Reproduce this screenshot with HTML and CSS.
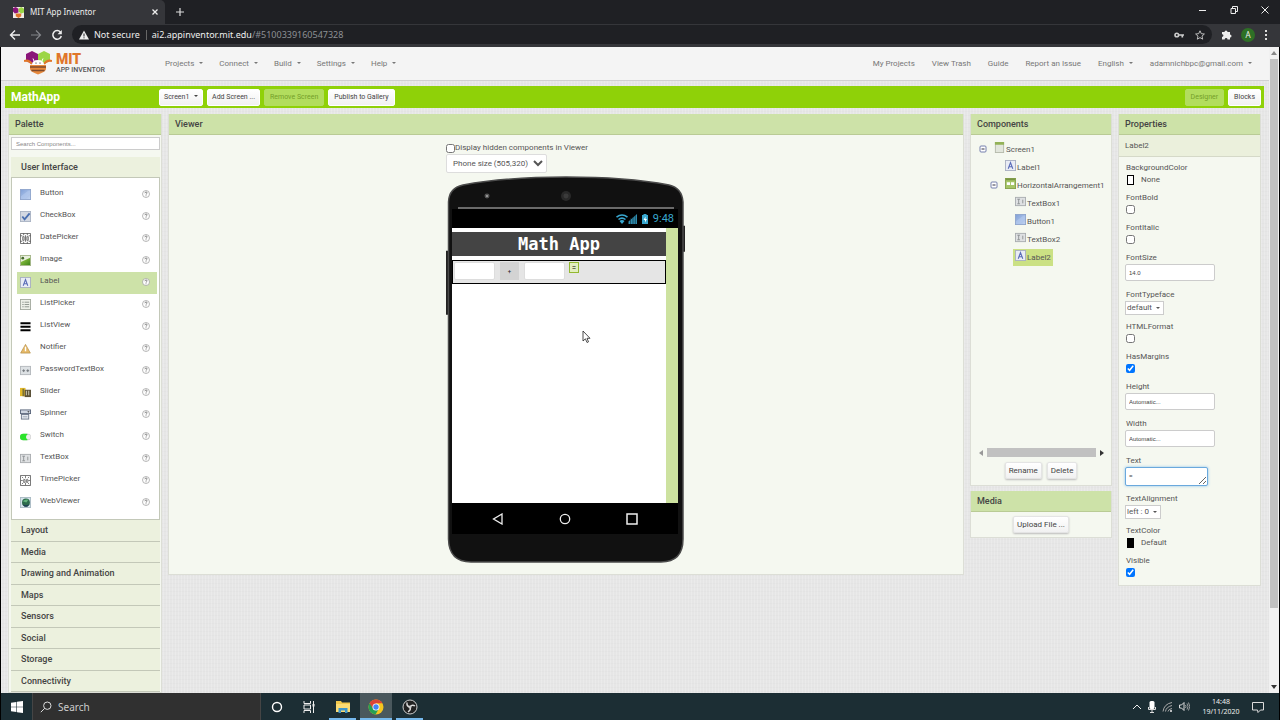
FILE: index.html
```
<!DOCTYPE html>
<html lang="en">
<head>
  <meta charset="utf-8">
  <title>MIT App Inventor</title>
  <link rel="stylesheet" href="styles.css">
</head>
<body>

<svg class="defs" width="0" height="0">
  <defs>
    <linearGradient id="blue" x1="0" y1="0" x2="1" y2="1"><stop offset="0" stop-color="#7f9fd6"/><stop offset="1" stop-color="#c3d5f2"/></linearGradient>
    <linearGradient id="green" x1="0" y1="0" x2="1" y2="1"><stop offset="0" stop-color="#9fce4a"/><stop offset="1" stop-color="#3d8417"/></linearGradient>
    <symbol id="i-button" viewBox="0 0 12 12"><rect x=".5" y=".5" width="11" height="11" fill="url(#blue)" stroke="#8fa5cc"/><path d="M1 8L9 2h2v3L5 11H1z" fill="#b4c9ee" opacity=".6"/></symbol>
    <symbol id="i-checkbox" viewBox="0 0 12 12"><rect x=".5" y=".5" width="11" height="11" fill="#d3d8e2" stroke="#aab3c4"/><path d="M2.500 6l2.500 3 5.500-6.500" fill="none" stroke="#4a6fb0" stroke-width="2"/></symbol>
    <symbol id="i-date" viewBox="0 0 12 12"><path d="M.5.5h11v11H.5zM.5 3h2M9.500 3h2M.5 9h2M9.500 9h2M4 .5v2M8 .5v2M4 9.500v2M8 9.500v2M6 2.500v7M3 4v4h1.500V4zM7.500 4v4H9V4z" fill="none" stroke="#444" stroke-width=".8"/></symbol>
    <symbol id="i-image" viewBox="0 0 12 12"><rect x=".5" y=".5" width="11" height="11" fill="#e8efdc" stroke="#a5b58a"/><path d="M1 7.500L11 3v8H1z" fill="url(#green)"/><circle cx="3" cy="3.500" r="1.500" fill="#446a2c"/></symbol>
    <symbol id="i-label" viewBox="0 0 12 12"><rect x=".5" y=".5" width="11" height="11" fill="#e9ecf5" stroke="#a9b0c2"/><path d="M3.500 9.500L6 2.800l2.500 6.700M4.300 7.300h3.400" fill="none" stroke="#5a6cb8" stroke-width="1.200"/></symbol>
    <symbol id="i-listpicker" viewBox="0 0 12 12"><rect x=".5" y=".5" width="11" height="11" fill="#edf0e8" stroke="#a3a9a0"/><path d="M2.500 3.500h1.500M5 3.500h5M2.500 6h1.500M5 6h5M2.500 8.500h1.500M5 8.500h5" stroke="#8a928a"/></symbol>
    <symbol id="i-listview" viewBox="0 0 12 12"><path d="M.5 2.500h11M.5 6.200h11M.5 10h11" stroke="#000" stroke-width="2.200"/></symbol>
    <symbol id="i-notifier" viewBox="0 0 12 12"><path d="M6 1.500L11.300 11H.7z" fill="#e6b968" stroke="#b8914a" stroke-width=".8"/><path d="M6 4v5" stroke="#fff" stroke-width="1.500"/></symbol>
    <symbol id="i-password" viewBox="0 0 12 12"><rect x=".5" y="1.500" width="11" height="9" fill="#dde1e4" stroke="#b3b8bc"/><path d="M2.500 6.200h3M4 4.700v3M7 6.200h3M8.500 4.700v3" stroke="#6e7478"/></symbol>
    <symbol id="i-slider" viewBox="0 0 12 12"><path d="M0 1h6v9H0z" fill="#e3b92a"/><path d="M5 3h7v8H5z" fill="#5b5138"/><path d="M3.500 2v8" stroke="#6f6a3c" stroke-width="1.500"/><path d="M7 4v5M9.500 4v5" stroke="#c0bfa8" stroke-width="1.200"/></symbol>
    <symbol id="i-spinner" viewBox="0 0 12 12"><rect x=".5" y="1" width="11" height="4" fill="#cfd6e2" stroke="#58647a"/><path d="M8 2.500l1.200 1.500 1.200-1.500z" fill="#333"/><rect x="1.500" y="6" width="8" height="5" fill="#e5e9ef" stroke="#6d778a"/><path d="M3 8.500h5" stroke="#9aa4b5"/></symbol>
    <symbol id="i-switch" viewBox="0 0 12 12"><rect x="0" y="3" width="12" height="7" rx="3.500" fill="#cfcfcf"/><path d="M3.500 3H8v7H3.500a3.500 3.500 0 010-7z" fill="#2be32b"/><circle cx="9" cy="6.500" r="2.500" fill="#eee"/></symbol>
    <symbol id="i-textbox" viewBox="0 0 12 12"><rect x=".5" y="1.500" width="11" height="9" fill="#dfe1e3" stroke="#a9adb0"/><path d="M2.500 3.500h3M2.500 8.500h3M4 3.500v5M8.500 4v4" stroke="#85898c" stroke-width=".9"/></symbol>
    <symbol id="i-time" viewBox="0 0 12 12"><path d="M.5.5h11v11H.5z" fill="none" stroke="#444" stroke-width=".8"/><path d="M6 1v2.500M6 8.500V11M1 6h2M9 6h2M2 2l1.500 1.500M10 2L8.500 3.500M2 10l1.500-1.500M10 10L8.500 8.500M4 5h1.500v3H4zM7 5h1.500v3H7z" fill="none" stroke="#555" stroke-width=".8"/></symbol>
    <symbol id="i-web" viewBox="0 0 12 12"><rect x=".5" y=".5" width="11" height="11" fill="#d5e3ea" stroke="#a9bac3"/><circle cx="6.500" cy="6" r="4.300" fill="#2c6b4c"/><path d="M3 4.500q3-2.500 6-1.500L7 6z" fill="#63b37c"/><path d="M2.500 7.500q4 3 8 0L8 10.500H5z" fill="#1d3c55"/></symbol>
    <symbol id="i-screen" viewBox="0 0 12 12"><rect x="1.500" y=".5" width="9" height="11" fill="#e2e6dc" stroke="#b5baac"/><path d="M1 0h10v3H1z" fill="#93b257"/></symbol>
    <symbol id="i-horiz" viewBox="0 0 12 12"><rect x=".5" y=".5" width="11" height="11" fill="#a5c566" stroke="#85a24b"/><path d="M1 .5h10v2H1z" fill="#789544"/><path d="M2 4.500h3.500v3H2zM6.500 4.500H10v3H6.500z" fill="#fff"/></symbol>
    <symbol id="i-help" viewBox="0 0 8 8"><circle cx="4" cy="4" r="3.500" fill="#fff" stroke="#999" stroke-width=".7"/><path d="M2.900 3.200q.1-1.200 1.200-1.200 1 0 1 .9 0 .6-.6.900-.5.3-.5.8M4 5.400v.8" fill="none" stroke="#666" stroke-width=".8"/></symbol>
    <symbol id="i-minus" viewBox="0 0 8 8"><rect x="1" y="1" width="6" height="6" rx="1" fill="#fff" stroke="#6673a5" stroke-width=".9"/><path d="M2.500 4h3" stroke="#334"/></symbol>
    <symbol id="i-logo" viewBox="0 0 28 24"><path d="M8 0l6 3v7l-6 3-6-3V3z" fill="#8a1579"/><path d="M20 0l6 3v7l-6 3-6-3V3z" fill="#9bd646"/><path d="M0 10q5-1.500 8 3M28 10q-5-1.500-8 3" fill="none" stroke="#e0762a" stroke-width="2"/><path d="M8 14q0-5 6-5t6 5z" fill="#fff"/><path d="M10 10l-1-2.500M18 10l1-2.500" stroke="#fff"/><circle cx="12" cy="12" r=".6"/><circle cx="16" cy="12" r=".6"/><path d="M6 14h16v4q0 2.500-8 5.500-8-3-8-5.500z" fill="#e88a3d"/><path d="M6 16h16M7.500 19.500h13" stroke="#7c4a2c" stroke-width="1.300"/></symbol>
  </defs>
</svg>

<div class="tabs">
  <div class="tab">
    <svg class="favicon" viewBox="0 0 12 12"><rect width="12" height="12" fill="#f3ece6"/><path d="M0 1l3-1 3 2v4L2 7 0 5z" fill="#8a1579"/><path d="M6 2l3-2 3 2v4L9 7 6 5z" fill="#9bd646"/><path d="M3 7h6v3l-3 2-3-2z" fill="#e0762a"/></svg>
    <span class="tab-title">MIT App Inventor</span>
    <button class="icon-btn" aria-label="Close tab"><svg width="8" height="8" viewBox="0 0 8 8"><path d="M1.500 1.500l5 5M6.500 1.500l-5 5" stroke="#eee" stroke-width="1.300"/></svg></button>
  </div>
  <button class="icon-btn new-tab" aria-label="New tab"><svg width="10" height="10" viewBox="0 0 10 10"><path d="M5 1v8M1 5h8" stroke="#ddd" stroke-width="1.200"/></svg></button>
  <div class="window-btns">
    <button class="icon-btn" aria-label="Minimize"><svg width="8" height="8" viewBox="0 0 8 8"><path d="M0 4.500h7" stroke="#eee"/></svg></button>
    <button class="icon-btn" aria-label="Restore"><svg width="8" height="8" viewBox="0 0 8 8"><path d="M1 2.500h4.500v5H1zM2.500 2.500v-2h5v5h-2" fill="none" stroke="#eee"/></svg></button>
    <button class="icon-btn" aria-label="Close"><svg width="8" height="8" viewBox="0 0 8 8"><path d="M.5.500l7 7M7.500.500l-7 7" stroke="#eee"/></svg></button>
  </div>
</div>

<div class="toolbar">
  <button class="icon-btn" aria-label="Back"><svg width="12" height="12" viewBox="0 0 12 12"><path d="M11 6H2M6 1.500L1.500 6 6 10.500" fill="none" stroke="#eee" stroke-width="1.400"/></svg></button>
  <button class="icon-btn" aria-label="Forward"><svg width="12" height="12" viewBox="0 0 12 12"><path d="M1 6h9M6 1.500L10.500 6 6 10.500" fill="none" stroke="#84868a" stroke-width="1.200"/></svg></button>
  <button class="icon-btn" aria-label="Reload"><svg width="12" height="12" viewBox="0 0 12 12"><path d="M9.500 3.200A4.300 4.300 0 1010.300 7" fill="none" stroke="#eee" stroke-width="1.500"/><path d="M10.800 1v4.300H6.500z" fill="#eee"/></svg></button>
  <div class="omnibox">
    <svg width="10" height="10" viewBox="0 0 10 10"><path d="M5 .5L10 9.500H0z" fill="#eee"/><path d="M5 3.500v3M5 7.300v1" stroke="#202124"/></svg>
    <span class="secure">Not secure</span>
    <span class="url"><b>ai2.appinventor.mit.edu</b>/#5100339160547328</span>
    <svg width="10" height="10" viewBox="0 0 10 10"><circle cx="2.800" cy="5" r="1.800" fill="none" stroke="#ccc" stroke-width="1.600"/><path d="M5 5h5M8.300 5v2.500" stroke="#ccc" stroke-width="1.700"/></svg>
    <svg width="10" height="10" viewBox="0 0 10 10"><path d="M5 .8l1.300 2.900 3.100.3L7 6.100l.7 3.100L5 7.600 2.300 9.200 3 6.100.6 4l3.100-.3z" fill="none" stroke="#ccc" stroke-width=".9"/></svg>
  </div>
  <svg width="11" height="11" viewBox="0 0 11 11"><path d="M1 3h2.500a1.500 1.500 0 113 0H9v2.500a1.500 1.500 0 110 3V10.500H6.500a1.400 1.400 0 10-2.800 0H1V8a1.400 1.400 0 100-2.800z" fill="#eee"/></svg>
  <span class="avatar">A</span>
  <svg width="4" height="10" viewBox="0 0 4 10"><path d="M1 0h2v2H1zM1 4h2v2H1zM1 8h2v2H1z" fill="#ddd"/></svg>
</div>

<div class="window">
  <div class="page">
    <header class="header">
      <svg class="logo" aria-hidden="true"><use href="#i-logo"/></svg>
      <div class="brand"><strong>MIT</strong><span>APP INVENTOR</span></div>
      <nav class="menu">
        <button>Projects <i class="caret"></i></button>
        <button>Connect <i class="caret"></i></button>
        <button>Build <i class="caret"></i></button>
        <button>Settings <i class="caret"></i></button>
        <button>Help <i class="caret"></i></button>
      </nav>
      <nav class="menu menu-right">
        <a href="#">My Projects</a>
        <a href="#">View Trash</a>
        <a href="#">Guide</a>
        <a href="#">Report an Issue</a>
        <button>English <i class="caret"></i></button>
        <button>adamnichbpc@gmail.com <i class="caret"></i></button>
      </nav>
    </header>

    <div class="project-bar">
      <h1>MathApp</h1>
      <button class="btn">Screen1 <i class="caret"></i></button>
      <button class="btn">Add Screen ...</button>
      <button class="btn" disabled>Remove Screen</button>
      <button class="btn">Publish to Gallery</button>
      <span class="spacer"></span>
      <button class="btn" disabled>Designer</button>
      <button class="btn">Blocks</button>
    </div>

    <main class="columns">
      <section class="panel palette">
        <h2>Palette</h2>
        <input class="search" type="text" placeholder="Search Components..." aria-label="Search Components">
        <h3>User Interface</h3>
        <ul class="items">
          <li><svg><use href="#i-button"/></svg>Button<svg class="help"><use href="#i-help"/></svg></li>
          <li><svg><use href="#i-checkbox"/></svg>CheckBox<svg class="help"><use href="#i-help"/></svg></li>
          <li><svg><use href="#i-date"/></svg>DatePicker<svg class="help"><use href="#i-help"/></svg></li>
          <li><svg><use href="#i-image"/></svg>Image<svg class="help"><use href="#i-help"/></svg></li>
          <li class="selected"><svg><use href="#i-label"/></svg>Label<svg class="help"><use href="#i-help"/></svg></li>
          <li><svg><use href="#i-listpicker"/></svg>ListPicker<svg class="help"><use href="#i-help"/></svg></li>
          <li><svg><use href="#i-listview"/></svg>ListView<svg class="help"><use href="#i-help"/></svg></li>
          <li><svg><use href="#i-notifier"/></svg>Notifier<svg class="help"><use href="#i-help"/></svg></li>
          <li><svg><use href="#i-password"/></svg>PasswordTextBox<svg class="help"><use href="#i-help"/></svg></li>
          <li><svg><use href="#i-slider"/></svg>Slider<svg class="help"><use href="#i-help"/></svg></li>
          <li><svg><use href="#i-spinner"/></svg>Spinner<svg class="help"><use href="#i-help"/></svg></li>
          <li><svg><use href="#i-switch"/></svg>Switch<svg class="help"><use href="#i-help"/></svg></li>
          <li><svg><use href="#i-textbox"/></svg>TextBox<svg class="help"><use href="#i-help"/></svg></li>
          <li><svg><use href="#i-time"/></svg>TimePicker<svg class="help"><use href="#i-help"/></svg></li>
          <li><svg><use href="#i-web"/></svg>WebViewer<svg class="help"><use href="#i-help"/></svg></li>
        </ul>
        <div class="drawers">
          <h3>Layout</h3>
          <h3>Media</h3>
          <h3>Drawing and Animation</h3>
          <h3>Maps</h3>
          <h3>Sensors</h3>
          <h3>Social</h3>
          <h3>Storage</h3>
          <h3>Connectivity</h3>
        </div>
      </section>

      <section class="panel viewer">
        <h2>Viewer</h2>
        <div class="viewer-body">
          <label class="hidden-toggle"><input type="checkbox">Display hidden components in Viewer</label>
          <select class="size-select" aria-label="Screen size"><option>Phone size (505,320)</option></select>
          <div class="phone">
            <svg class="phone-shell" viewBox="0 0 240 388" preserveAspectRatio="none">
              <path d="M0 75h3v64H0zM236 50h3v26h-3z" fill="#222"/>
              <path d="M2.500 26Q3 12 17 9 60 1 120 1t103 8q13 3 14 17v338q0 23-22 23H25q-22 0-22.500-23z" fill="#111" stroke="#4b4b4b" stroke-width="1.500"/>
              <circle cx="41" cy="20" r="2.500" fill="#555"/><circle cx="41" cy="20" r="1" fill="#aaa"/>
              <circle cx="120" cy="20" r="5" fill="#292929"/><circle cx="120" cy="20" r="2.500" fill="#3b3b3b"/>
              <path d="M12 32h216" stroke="#888" stroke-width="1.500"/>
            </svg>
            <div class="screen">
              <div class="status">
                <svg width="32" height="10" viewBox="0 0 32 10"><g fill="none" stroke="#38a7cf" stroke-width="1.600"><path d="M.5 3.200q5.500-4.400 11 0M2.500 5.500q3.500-2.800 7 0"/></g><path d="M3.500 7q2.500-2 5 0L6 10z" fill="#38a7cf"/><path d="M12.500 10V7.500L21 0v10z" fill="#2f8cae"/><path d="M14.500 4v6M17 3v7M19.300 1v9" stroke="#0b2630" stroke-width=".6"/><path d="M26 1h1.500V0h3v1H32v9h-6z" fill="#38a7cf"/><path d="M29.500 2.500L27.500 6H29v2.500L31 5h-1.500z" fill="#fff"/></svg>
                <span>9:48</span>
              </div>
              <div class="app">
                <div class="app-body">
                  <div class="app-title">Math App</div>
                  <div class="app-row">
                    <input type="text" aria-label="TextBox1">
                    <button>+</button>
                    <input type="text" aria-label="TextBox2">
                    <span class="app-label">=</span>
                  </div>
                </div>
                <div class="app-scroll"></div>
              </div>
              <div class="softkeys">
                <svg viewBox="0 0 12 12"><path d="M10 1v10L1.500 6z" fill="none" stroke="#eee" stroke-width="1.300"/></svg>
                <svg viewBox="0 0 12 12"><circle cx="6" cy="6" r="4.700" fill="none" stroke="#eee" stroke-width="1.300"/></svg>
                <svg viewBox="0 0 12 12"><path d="M1 1h10v10H1z" fill="none" stroke="#eee" stroke-width="1.500"/></svg>
              </div>
            </div>
          </div>
        </div>
      </section>

      <div class="side">
        <section class="panel components">
          <h2>Components</h2>
          <ul class="tree">
            <li><svg class="toggle"><use href="#i-minus"/></svg><span><svg><use href="#i-screen"/></svg>Screen1</span></li>
            <li class="level1"><span><svg><use href="#i-label"/></svg>Label1</span></li>
            <li class="level1"><svg class="toggle"><use href="#i-minus"/></svg><span><svg><use href="#i-horiz"/></svg>HorizontalArrangement1</span></li>
            <li class="level2"><span><svg><use href="#i-textbox"/></svg>TextBox1</span></li>
            <li class="level2"><span><svg><use href="#i-button"/></svg>Button1</span></li>
            <li class="level2"><span><svg><use href="#i-textbox"/></svg>TextBox2</span></li>
            <li class="level2"><span class="picked"><svg><use href="#i-label"/></svg>Label2</span></li>
          </ul>
          <div class="hscroll">
            <svg width="4" height="6" viewBox="0 0 4 6"><path d="M4 0v6L0 3z" fill="#999"/></svg>
            <div class="hthumb"></div>
            <svg width="4" height="6" viewBox="0 0 4 6"><path d="M0 0v6l4-3z" fill="#333"/></svg>
          </div>
          <div class="actions">
            <button class="btn">Rename</button>
            <button class="btn">Delete</button>
          </div>
        </section>
        <section class="panel media">
          <h2>Media</h2>
          <div class="actions"><button class="btn">Upload File ...</button></div>
        </section>
      </div>

      <section class="panel properties">
        <h2>Properties</h2>
        <div class="prop-name">Label2</div>
        <div class="props">
          <div class="prop"><span>BackgroundColor</span><button class="color"><i class="swatch none"></i>None</button></div>
          <div class="prop"><label for="bold">FontBold</label><input type="checkbox" id="bold"></div>
          <div class="prop"><label for="italic">FontItalic</label><input type="checkbox" id="italic"></div>
          <div class="prop"><label for="size">FontSize</label><input type="text" id="size" value="14.0"></div>
          <div class="prop"><label for="face">FontTypeface</label><div class="pick"><select id="face"><option>default</option></select><i class="caret"></i></div></div>
          <div class="prop"><label for="html">HTMLFormat</label><input type="checkbox" id="html"></div>
          <div class="prop"><label for="margins">HasMargins</label><input type="checkbox" id="margins" checked></div>
          <div class="prop"><label for="height">Height</label><input type="text" id="height" value="Automatic..."></div>
          <div class="prop"><label for="width">Width</label><input type="text" id="width" value="Automatic..."></div>
          <div class="prop"><label for="text">Text</label><textarea id="text">=</textarea></div>
          <div class="prop"><label for="align">TextAlignment</label><div class="pick"><select id="align"><option>left : 0</option></select><i class="caret"></i></div></div>
          <div class="prop"><span>TextColor</span><button class="color"><i class="swatch"></i>Default</button></div>
          <div class="prop"><label for="visible">Visible</label><input type="checkbox" id="visible" checked></div>
        </div>
      </section>
    </main>
  </div>

  <div class="vscroll">
    <svg width="6" height="4" viewBox="0 0 6 4"><path d="M0 4h6L3 0z" fill="#888"/></svg>
    <div class="vthumb"></div>
    <svg width="6" height="4" viewBox="0 0 6 4"><path d="M0 0h6L3 4z" fill="#333"/></svg>
  </div>
</div>

<footer class="taskbar">
  <button class="task start" aria-label="Start"><svg width="12" height="12" viewBox="0 0 12 12"><path d="M0 1.700l5.400-.8v4.800H0zM6 .8L12 0v5.700H6zM0 6.300h5.400v4.800L0 10.300zM6 6.300h6V12l-6-.8z" fill="#fff"/></svg></button>
  <button class="win-search"><svg width="12" height="12" viewBox="0 0 12 12"><circle cx="7.300" cy="4.700" r="3.700" fill="none" stroke="#ddd"/><path d="M4.700 7.300L.8 11.200" stroke="#ddd"/></svg>Search</button>
  <button class="task" aria-label="Cortana"><svg width="12" height="12" viewBox="0 0 12 12"><circle cx="6" cy="6" r="4.500" fill="none" stroke="#fff" stroke-width="1.400"/></svg></button>
  <button class="task" aria-label="Task view"><svg width="12" height="12" viewBox="0 0 12 12"><path d="M1 0v2.500h6.500V0M1 12V9.500h6.500V12M1 4h6.500v4H1zM10.500 0v12" fill="none" stroke="#eee"/><path d="M9.500 3h2v2.500h-2z" fill="#eee"/></svg></button>
  <button class="task open" aria-label="File Explorer"><svg width="14" height="14" viewBox="0 0 14 14"><path d="M0 1h5l1 1.500h8V12H0z" fill="#f2c84b"/><path d="M0 4h14v8H0z" fill="#fbdc74"/><path d="M2.500 13V8h9v5H9v-2.500H5V13z" fill="#3f96c9"/></svg></button>
  <button class="task open active" aria-label="Chrome"><svg width="16" height="16" viewBox="0 0 16 16"><circle cx="8" cy="8" r="7.500" fill="#f4c51f"/><path d="M8 8L1.500 4.250A7.500 7.500 0 0114.500 4.250L8 4.250z" fill="#dc4437"/><path d="M1.500 4.250A7.500 7.500 0 007.500 15.500L11 9.500 8 8z" fill="#26a053"/><path d="M1.500 4.250L5 9.500l3-5.250z" fill="#dc4437"/><circle cx="8" cy="8" r="3.500" fill="#fff"/><circle cx="8" cy="8" r="2.700" fill="#4285f4"/></svg></button>
  <button class="task open" aria-label="OBS"><svg width="16" height="16" viewBox="0 0 16 16"><circle cx="8" cy="8" r="7" fill="#222" stroke="#ccc"/><path d="M8 8Q4.500 7.500 5 3.500M8 8q2-3 5-1M8 8q1.300 3-2 4.800" fill="none" stroke="#ddd" stroke-width="1.400"/><circle cx="8" cy="8" r="1.500" fill="#ccc"/></svg></button>
  <div class="tray">
    <svg width="10" height="10" viewBox="0 0 10 10"><path d="M1 7l4-4 4 4" fill="none" stroke="#eee"/></svg>
    <svg width="8" height="12" viewBox="0 0 8 12"><rect x="1.500" width="5" height="8" rx="1.500" fill="#fff"/><path d="M.5 6v2.500h7V6M4 8.500V11M2 11.500h4" fill="none" stroke="#ddd"/></svg>
    <svg width="11" height="11" viewBox="0 0 11 11"><g fill="none" stroke="#aaa"><path d="M1 10.500Q2 3 10 1.500M3.500 10.500Q4 6 10 4.500M6 10.500Q6.500 8 10 7.500"/></g><circle cx="9" cy="10" r="1" fill="#eee"/></svg>
    <svg width="11" height="11" viewBox="0 0 11 11"><path d="M.5 4h2L5 1.500v8L2.500 7h-2z" fill="none" stroke="#ddd"/><path d="M6.500 4q1 1.500 0 3M8 2.500q2 3 0 6M9.500 1.500q2.500 4 0 8" fill="none" stroke="#bbb" stroke-width=".8"/></svg>
    <div class="clock"><span>14:48</span><span>19/11/2020</span></div>
    <svg width="12" height="12" viewBox="0 0 12 12"><path d="M.5 1.500h11v7.500H8.500L6 11.500 5.500 9h-5z" fill="none" stroke="#ddd"/></svg>
  </div>
</footer>

<svg class="cursor" viewBox="0 0 9 14"><path d="M1 1v10l2.400-2.200L5 12.500l1.500-.7L5 8.300h3z" fill="#fff" stroke="#222" stroke-width=".8"/></svg>

</body>
</html>
```
FILE: styles.css
```
* { box-sizing: border-box; }
body {
  margin: 0;
  height: 100vh;
  display: flex;
  flex-direction: column;
  overflow: hidden;
  background: #000;
  color: #555;
  font: 8px/10px Roboto, Arial, sans-serif;
}
h1, h2, h3, ul { margin: 0; padding: 0; }
ul { list-style: none; }
svg { display: block; flex: none; }
button, input, select, textarea { margin: 0; font: inherit; color: inherit; }
button { cursor: pointer; }
.defs { position: absolute; }
.icon-btn { display: flex; padding: 0; border: 0; background: none; }

.caret {
  display: inline-block;
  margin-left: 3px;
  vertical-align: 2px;
  border: 2px solid transparent;
  border-top-color: currentColor;
  border-bottom: 0;
}

/* browser chrome */
.tabs, .toolbar {
  display: flex;
  align-items: center;
  font-family: "Noto Sans", sans-serif;
  color: #eee;
}
.tabs { height: 24px; background: #1f2024; }
.tab {
  display: flex;
  align-items: center;
  width: 165px;
  height: 24px;
  padding: 0 6px 0 13px;
  background: #35363a;
  border-radius: 0 5px 0 0;
}
.favicon { width: 11px; height: 11px; }
.tab-title { flex: 1; margin-left: 6px; }
.new-tab { margin-left: 10px; }
.window-btns { display: flex; gap: 23px; margin-left: auto; padding: 0 11px 5px 0; }
.toolbar { height: 23px; padding: 0 12px 2px 9px; gap: 9px; background: #35363a; }
.omnibox {
  flex: 1;
  display: flex;
  align-items: center;
  gap: 11px;
  height: 19px;
  padding: 0 7px;
  border-radius: 10px;
  background: #1f2024;
  font-size: 9px;
}
.secure { margin-left: -6px; padding-right: 6px; border-right: 1px solid #666; }
.url { flex: 1; margin-left: -6px; color: #8d9094; }
.url b { font-weight: 400; color: #eee; }
.avatar {
  width: 14px;
  border-radius: 7px;
  background: #2e7026;
  line-height: 14px;
  text-align: center;
}

/* page */
.window { flex: 1; display: flex; min-height: 0; margin: 0 1px; }
.page {
  flex: 1;
  display: flex;
  flex-direction: column;
  min-width: 0;
  background:
    repeating-linear-gradient(90deg, rgba(255,255,255,.18) 0 1px, transparent 1px 3px),
    repeating-linear-gradient(rgba(0,0,0,.012) 0 1px, transparent 1px 4px),
    #e6e6e6;
}
.vscroll {
  display: flex;
  flex-direction: column;
  align-items: center;
  justify-content: space-between;
  width: 10px;
  padding: 4px 0;
  background: #f1f1f1;
}
.vthumb { width: 8px; height: 549px; margin: 4px 0 auto; background: #c1c1c1; }

.header {
  display: flex;
  align-items: center;
  height: 34px;
  flex: none;
  padding: 0 17px 0 23px;
  border-bottom: 1px solid #d0d0d0;
  background: #f4f4f4;
}
.logo { width: 28px; height: 24px; margin-bottom: 2px; }
.brand { width: 109px; margin: 0 0 0 4px; display: flex; flex-direction: column; color: #555; font-size: 7px; line-height: 8px; font-weight: 500; }
.brand strong { color: #e0762a; font-size: 14px; line-height: 13px; font-weight: 900; }
.menu { display: flex; gap: 16px; }
.menu-right { gap: 17px; margin-left: auto; }
.menu button, .menu a { padding: 0; border: 0; background: none; color: #777; text-decoration: none; white-space: nowrap; }

.project-bar {
  display: flex;
  align-items: center;
  gap: 4px;
  height: 22px;
  flex: none;
  margin: 5px 5px 6px 4px;
  padding: 0 3px 0 6px;
  background: #8fd108;
}
.project-bar h1 { width: 144px; color: #fff; font-size: 12px; line-height: 16px; }
.project-bar .btn { padding: 0 4px; border-color: #fff; box-shadow: none; font-size: 7px; }
.project-bar .btn:disabled { border-color: #b2dd5e; background: #b2dd5e; color: #74a02a; }
.project-bar .btn:not(:first-of-type) { padding: 0 5px; }
.project-bar .btn:nth-of-type(2) { padding: 0 4px; }
.spacer { flex: 1; }
.btn {
  height: 17px;
  padding: 0 3px;
  border: 1px solid #e4e4e4;
  border-radius: 2px;
  background: linear-gradient(#fff, #f1f1f1);
  box-shadow: 0 1px 2px #bbb;
  color: #444;
  white-space: nowrap;
}

.columns { flex: 1; display: flex; align-items: flex-start; gap: 6px; min-height: 0; padding: 0 8px 0 7px; }
.panel { border: 1px solid #dcded6; border-top: 0; background: #f5f8f0; }
.panel h2 {
  height: 21px;
  flex: none;
  padding: 0 6px;
  border-bottom: 1px solid #b9cb95;
  background: #cde2a8;
  color: #444;
  font-size: 9px;
  font-weight: 500;
  line-height: 21px;
}

.palette { align-self: stretch; display: flex; flex-direction: column; width: 154px; flex: none; }
.search { flex: none; height: 13px; margin: 2px 1px 7px 2px; padding: 0 4px; border: 1px solid #ccc; background: #fff; font: 6px/8px "Liberation Sans", sans-serif; }
.search::placeholder { color: #888; }
.palette h3 {
  margin: 0 1px 0 2px;
  padding: 0 10px;
  border-bottom: 1px solid #c3c8b8;
  background: #ecf1de;
  color: #444;
  font-size: 9px;
  font-weight: 500;
  line-height: 20px;
}
.items { margin: 0 1px 0 2px; padding: 6px 2px 5px 5px; border: 1px solid #c3c8b8; border-top: 0; background: #fff; }
.items li { display: flex; align-items: center; height: 22px; padding: 0 7px 5px 3px; }
.items li.selected { background: #cde2a8; }
.items svg { width: 11px; height: 11px; margin: 3px 9px 0 0; }
.items .help { width: 8px; height: 8px; margin: 2px 0 0 auto; }
.drawers { flex: 1; display: flex; flex-direction: column; }
.drawers h3 { flex: 1; }

.viewer { flex: 1; min-width: 0; }
.viewer-body { display: flex; flex-direction: column; width: 240px; margin: 0 auto; padding: 7px 0 11px; }
.hidden-toggle { display: flex; align-items: center; height: 12px; }
.hidden-toggle input { width: 9px; height: 9px; }
.size-select { align-self: flex-start; height: 19px; width: 101px; padding: 0 2px; border: 1px solid #ddd; border-radius: 2px; background: #fff; }
.phone { position: relative; height: 387px; margin-top: 3px; padding: 33px 8px 30px 6px; }
.phone-shell { position: absolute; inset: 0; width: 100%; height: 100%; }
.screen { position: relative; background: #000; }
.status { display: flex; align-items: center; justify-content: flex-end; gap: 5px; height: 19px; padding-right: 4px; color: #38a7cf; font-size: 11px; }
.app { display: flex; height: 275px; background: #fff; }
.app-body { flex: 1; padding-top: 4px; }
.app-scroll { width: 12px; background: #cde2a0; }
.app-title { height: 24px; background: #444; color: #fff; font: bold 17px/24px "DejaVu Sans Mono", monospace; text-align: center; }
.app-row { display: flex; height: 24px; margin-top: 4px; padding: 1px; border: 1px solid #000; background: #e5e5e5; }
.app-row input { width: 41px; height: 18px; border: 1px solid #ddd; border-radius: 2px; background: #fff; }
.app-row button { width: 19px; height: 18px; margin: 0 5px; padding: 0; border: 0; background: #d3d3d3; color: #222; font-size: 6px; }
.app-label { width: 10px; height: 11px; margin-left: 4px; border: 1px solid #93b830; background: #e2eebf; color: #000; text-align: center; }
.softkeys { display: flex; align-items: center; justify-content: space-between; height: 31px; padding: 0 40px; }
.softkeys svg { width: 12px; height: 12px; }

.side { width: 142px; flex: none; }
.tree { height: 311px; padding: 5px 0 0 8px; overflow: hidden; }
.tree li { display: flex; align-items: center; height: 18px; }
.tree span { display: flex; align-items: flex-end; height: 17px; padding: 0 2px 3px 2px; white-space: nowrap; }
.tree span svg { width: 11px; height: 11px; margin: 0 1px 2px 0; }
.tree .toggle { width: 8px; height: 8px; margin-right: 5px; }
.level1 { padding-left: 11px; }
.level1 span:first-child { margin-left: 13px; }
.level2 { padding-left: 34px; }
.tree .picked { background: #cbe184; }
.hscroll { display: flex; align-items: center; justify-content: space-between; height: 13px; padding: 0 7px 0 8px; }
.hthumb { width: 109px; height: 9px; background: #c1c1c1; }
.actions { display: flex; justify-content: center; gap: 5px; padding: 2px 0 7px; }
.components .actions { padding: 3px 0 6px; }
.media { margin-top: 5px; }
.media .actions { padding: 4px 0; }

.properties { width: 143px; flex: none; }
.prop-name { height: 22px; padding: 0 6px; border-bottom: 1px solid #d5d9c8; background: #ebf0dc; line-height: 21px; }
.props { padding: 5px 7px 0 6px; }
.prop { display: flex; flex-direction: column; align-items: flex-start; padding-bottom: 6px; line-height: 12px; }
.prop > label, .prop > span { padding-left: 1px; }
.prop input[type="checkbox"] { width: 9px; height: 9px; margin: 1px 0 2px 1px; }
.prop input[type="text"], .prop textarea {
  width: 90px;
  height: 17px;
  margin-bottom: 2px;
  padding: 0 3px;
  border: 1px solid #ccc;
  border-radius: 2px;
  background: #fff;
  color: #444;
  font: 6px/8px "Liberation Sans", sans-serif;
}
.prop textarea { width: 83px; height: 19px; margin-bottom: 1px; padding: 4px 3px; border-color: #6aa9dd; box-shadow: 0 0 3px #8cc1ea; }
.color { display: flex; align-items: center; gap: 7px; height: 12px; padding: 0 2px; border: 0; background: none; }
.swatch { width: 7px; height: 10px; border: 1px solid #000; background: #000; }
.swatch.none { background: #fff; }
.pick { display: flex; align-items: center; height: 14px; padding-right: 3px; border: 1px solid #ccc; background: #fff; }
.pick select { appearance: none; height: 12px; padding: 0 1px; border: 0; background: none; line-height: 10px; }

/* windows taskbar */
.taskbar { display: flex; height: 27px; flex: none; margin: 0 1px; background: #1c2e34; color: #eee; font-family: "Noto Sans", sans-serif; }
.task { display: flex; align-items: center; justify-content: center; width: 32px; padding: 0; border: 0; background: none; }
.start { width: 31px; }
.win-search { display: flex; align-items: center; gap: 6px; width: 229px; padding: 0 7px; border: 1px solid #454545; border-width: 0 1px; background: #303030; color: #ccc; font-size: 10px; }
.task.open { border-bottom: 2px solid #76b9ed; width: 27px; margin-right: 4px; padding-top: 2px; }
.task + .task.open { margin-left: 4px; }
.task.open.active { width: 32px; margin: 0; background: #4a585d; }
.tray { display: flex; align-items: center; gap: 6px; margin-left: auto; padding-right: 15px; }
.clock { display: flex; flex-direction: column; width: 50px; font-size: 7px; text-align: center; }

.cursor { position: absolute; left: 582px; top: 330px; width: 9px; height: 14px; }
```
